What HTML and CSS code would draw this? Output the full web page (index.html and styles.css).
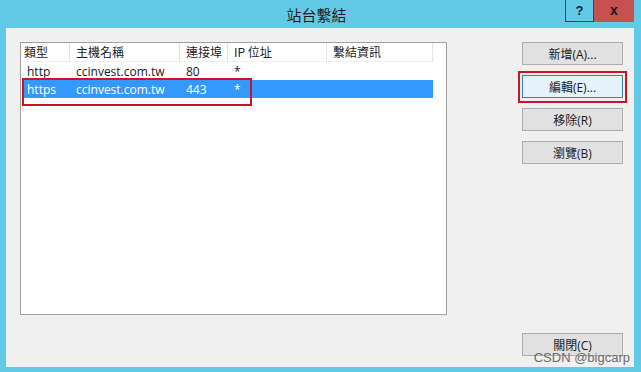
FILE: index.html
```html
<!DOCTYPE html>
<html lang="zh-Hant">
<head>
  <meta charset="UTF-8">
  <title>站台繫結</title>
  <link rel="stylesheet" href="styles.css">
</head>
<body>
  <div class="window">
    <div class="title-bar">
      <span class="title">站台繫結</span>
      <div class="caption-buttons">
        <span class="cap-help">?</span>
        <span class="cap-close">x</span>
      </div>
    </div>

    <div class="client">
      <div class="list">
        <div class="row header">
          <span class="col c-type">類型</span>
          <span class="col c-host">主機名稱</span>
          <span class="col c-port">連接埠</span>
          <span class="col c-ip">IP 位址</span>
          <span class="col c-info">繫結資訊</span>
        </div>
        <div class="row">
          <span class="col c-type">http</span>
          <span class="col c-host">ccinvest.com.tw</span>
          <span class="col c-port">80</span>
          <span class="col c-ip">*</span>
          <span class="col c-info"></span>
        </div>
        <div class="row selected">
          <span class="col c-type">https</span>
          <span class="col c-host">ccinvest.com.tw</span>
          <span class="col c-port">443</span>
          <span class="col c-ip">*</span>
          <span class="col c-info"></span>
        </div>
        <div class="mark mark-row"></div>
      </div>

      <div class="actions">
        <button>新增(A)...</button>
        <button class="focused">編輯(E)...<span class="mark mark-btn"></span></button>
        <button>移除(R)</button>
        <button>瀏覽(B)</button>
        <button class="close-btn">關閉(C)</button>
      </div>
    </div>
  </div>
  <div class="watermark">CSDN @bigcarp</div>
</body>
</html>
```

FILE: styles.css
```css
body {
  margin: 0;
  width: 641px;
  height: 372px;
  overflow: hidden;
  background: #62c9e6;
  font-family: "Open Sans", "Noto Sans CJK TC", sans-serif;
  font-size: 12px;
  color: #1a1a1a;
  position: relative;
}

.window {
  display: flex;
  flex-direction: column;
  height: 100%;
}

.title-bar {
  height: 28px;
  display: flex;
  align-items: center;
  position: relative;
}

.title {
  flex: 1;
  text-align: center;
  font-family: "Noto Sans CJK TC", sans-serif;
  font-size: 15px;
  color: #1e1e1e;
  padding-right: 8px;
}

.caption-buttons {
  position: absolute;
  top: 0;
  right: 7px;
  display: flex;
}

.cap-help {
  width: 27px;
  height: 21px;
  border: 1px solid #2b4a5a;
  border-top: none;
  font-family: "Liberation Sans", sans-serif;
  font-weight: bold;
  font-size: 13px;
  color: #0d2233;
  display: flex;
  align-items: center;
  justify-content: center;
}

.cap-close {
  width: 40px;
  height: 22px;
  background: #c75050;
  font-family: "Liberation Sans", sans-serif;
  font-weight: bold;
  font-size: 14px;
  color: #1a1a1a;
  display: flex;
  align-items: center;
  justify-content: center;
  padding-bottom: 2px;
  box-sizing: border-box;
}

.client {
  flex: 1;
  margin: 0 7px 5px 6px;
  background: #f0f0f0;
  display: flex;
  padding: 14px 11px 11px 14px;
}

.list {
  width: 425px;
  height: 271px;
  background: #fff;
  border: 1px solid #a0a0a0;
  position: relative;
}

.row {
  display: flex;
  height: 18px;
  align-items: center;
  margin-left: 3px;
  width: 409px;
}

.row.header {
  height: 19px;
  margin-left: 0;
  width: 412px;
  border-bottom: 1px solid #f0f0f0;
  box-sizing: border-box;
}

.header .col {
  border-right: 1px solid #e5e5e5;
  height: 19px;
  line-height: 18px;
  font-family: "Noto Sans CJK TC", sans-serif;
  color: #222;
}

.col {
  box-sizing: border-box;
  padding-left: 6px;
  white-space: nowrap;
}

.header .c-type { width: 49px; }
.c-type { width: 46px; padding-left: 3px; }
.c-host { width: 110px; }
.c-port { width: 48px; }
.c-ip { width: 99px; }
.c-info { width: 106px; }

.selected {
  background: #3399ff;
  color: #fff;
}

.mark {
  position: absolute;
  border: 2px solid #cc1424;
  pointer-events: none;
}

.mark-row {
  left: 1px;
  top: 35px;
  width: 226px;
  height: 24px;
}

.actions {
  margin-left: 75px;
  flex: 1;
  display: flex;
  flex-direction: column;
  gap: 10px;
}

button {
  position: relative;
  height: 23px;
  font-family: "Open Sans", "Noto Sans CJK TC", sans-serif;
  font-size: 12px;
  color: #1a1a1a;
  background: #e1e1e1;
  border: 1px solid #adadad;
  padding: 0;
}

button.focused {
  background: #e5f1fb;
  border-color: #3c7fb1;
}

.mark-btn {
  left: -5px;
  top: -5px;
  width: 105px;
  height: 28px;
}

.close-btn {
  margin-top: auto;
}

.watermark {
  position: absolute;
  right: 11px;
  bottom: 7px;
  font-family: "Liberation Sans", sans-serif;
  font-size: 13px;
  color: #6a6a6a;
}
```
